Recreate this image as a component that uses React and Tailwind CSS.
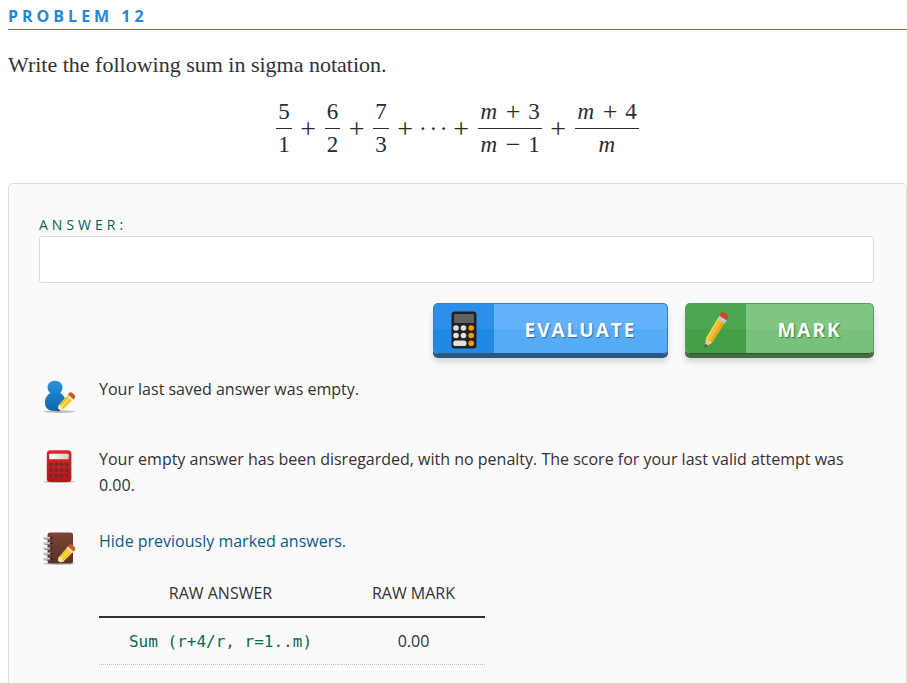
function Fraction({ top, bottom }) {
  return (
    <span className="flex flex-col items-stretch text-center">
      <span className="h-8 border-b border-[#2b2b30] px-[2px] leading-[30px]">{top}</span>
      <span className="h-8 px-[2px] leading-8">{bottom}</span>
    </span>
  );
}

function Op({ children }) {
  return <span className="w-[33px] text-center text-[28px] leading-8">{children}</span>;
}

function Term({ sign, n }) {
  return (
    <span className="flex justify-between">
      <i className="w-[18px]">m</i>
      <span className="w-[26px] text-center text-[26px]">{sign}</span>
      <span>{n}</span>
    </span>
  );
}

function Formula() {
  return (
    <div className="mt-[17px] flex items-center justify-center font-['Liberation_Serif',serif] text-[23px] text-[#2b2b30]">
      <Fraction top="5" bottom="1" />
      <Op>+</Op>
      <Fraction top="6" bottom="2" />
      <Op>+</Op>
      <Fraction top="7" bottom="3" />
      <Op>+</Op>
      <span className="-mx-1 flex w-[31px] leading-8">
        <span className="flex-1 text-center">·</span>
        <span className="flex-1 text-center">·</span>
        <span className="flex-1 text-center">·</span>
      </span>
      <Op>+</Op>
      <span className="w-16">
        <Fraction top={<Term sign="+" n="3" />} bottom={<Term sign="−" n="1" />} />
      </span>
      <Op>+</Op>
      <span className="w-16">
        <Fraction top={<Term sign="+" n="4" />} bottom={<i>m</i>} />
      </span>
    </div>
  );
}

function CalculatorIcon() {
  return (
    <svg viewBox="0 0 26 38" className="h-[38px] w-[26px]" aria-hidden="true">
      <rect x="0.5" y="0.5" width="25" height="37" rx="3" fill="#212121" />
      <rect x="3" y="3" width="20" height="9" rx="1" fill="#616161" />
      <g fill="#e0e0e0">
        <circle cx="5" cy="17" r="2.8" />
        <circle cx="12.5" cy="17" r="2.8" />
        <circle cx="5" cy="24.5" r="2.8" />
        <circle cx="12.5" cy="24.5" r="2.8" />
        <rect x="2.2" y="29.5" width="13.3" height="5.6" rx="2.6" />
      </g>
      <g fill="#ff9800">
        <circle cx="20.2" cy="17" r="2.8" />
        <circle cx="20.2" cy="24.5" r="2.8" />
        <circle cx="20.2" cy="32.2" r="2.8" />
      </g>
    </svg>
  );
}

function PencilIcon() {
  return (
    <svg viewBox="0 0 26 38" className="h-[38px] w-[26px]" aria-hidden="true">
      <path d="M3 27 L1.8 36.5 L9.5 31.5 Z" fill="#f0c98c" />
      <path d="M2.2 33 L1.5 37 L5 34.6 Z" fill="#5d4037" />
      <path d="M3 27 L15.3 6.5 L18.5 8.4 L5.5 29.5 Z" fill="#ffd54f" />
      <path d="M5.3 29 L17.6 7.8 L22.7 10.8 L9.5 31.5 Z" fill="#e5a51c" />
      <path d="M4.2 28 L16.3 7 L19.7 9 L7.3 30.3 Z" fill="#f2bd3a" />
      <path d="M14.2 8.2 L16.6 4.2 L24.1 8.6 L21.8 12.6 Z" fill="#c4c8ca" />
      <path d="M16.2 4.8 L17.4 2.4 Q18.4 0.8 21 1.4 L24 3.3 Q25.7 5 24.8 7.2 L23.6 9.2 Z" fill="#d84325" />
    </svg>
  );
}

function SmallPencil() {
  return (
    <g>
      <path d="M15.5 25.5 L24.5 15 L30 20 L20.5 29.5 L15.2 30.5 Z" fill="#fbd83c" />
      <path d="M15.5 25.5 L18 25.2 L20.8 29.4 L14.5 31 Z" fill="#f7e2b0" />
      <path d="M17.5 25.2 L26 15.8 M19.8 28 L28.5 18.6" stroke="#e3a51c" strokeWidth="1" />
      <path d="M23.5 16 L25.2 14.2 L31 19.3 L29.3 21 Z" fill="#e9e3d6" />
      <path d="M24.8 14.5 L26.6 12.6 Q28 11.8 29.5 13 L32 15.5 Q32.8 17 31.8 18 L30.6 19.5 Z" fill="#d4581c" />
      <path d="M13.8 31.5 L14.6 28.2 L17.3 30.8 Z" fill="#404040" />
    </g>
  );
}

function Shadow() {
  return <ellipse cx="16" cy="31.6" rx="16" ry="1.3" fill="#bdbdbd" />;
}

function UserIcon() {
  return (
    <svg viewBox="0 0 33 33" className="h-[33px] w-[33px]" aria-hidden="true">
      <defs>
        <linearGradient id="user-fill" x1="0" y1="0" x2="0" y2="1">
          <stop offset="0" stopColor="#2a95dc" />
          <stop offset="1" stopColor="#0866ae" />
        </linearGradient>
      </defs>
      <Shadow />
      <path
        d="M12 0.8 C16.8 0.8 19.4 3.8 19.4 7.4 C19.4 10 18.5 11.7 17 13 C20.5 14.5 22.5 18 22.5 22 C22.5 28 20 31 12.3 31 C5 31 2 28 2 22.5 C2 18.5 4 14.8 7.6 13.1 C5.7 11.8 4.6 10 4.6 7.4 C4.6 3.8 7.2 0.8 12 0.8 Z"
        fill="url(#user-fill)"
      />
      <SmallPencil />
    </svg>
  );
}

function RedCalculatorIcon() {
  return (
    <svg viewBox="0 0 33 33" className="h-[33px] w-[33px]" aria-hidden="true">
      <defs>
        <linearGradient id="red-fill" x1="0" y1="0" x2="0" y2="1">
          <stop offset="0" stopColor="#d62b2b" />
          <stop offset="1" stopColor="#b51518" />
        </linearGradient>
        <linearGradient id="display-fill">
          <stop offset="0" stopColor="#ffffff" />
          <stop offset="1" stopColor="#cfcfcf" />
        </linearGradient>
      </defs>
      <Shadow />
      <rect x="3.8" y="0.2" width="24.6" height="31.8" rx="3.5" fill="url(#red-fill)" />
      <rect x="6.2" y="3.8" width="19.5" height="5.4" rx="1" fill="url(#display-fill)" />
      <g fill="#6d2c2c">
        {[14.5, 20, 25.5].map((y) =>
          [8, 13.3, 18.6, 23.9].map((x) => <circle key={`${x}-${y}`} cx={x} cy={y} r="1.9" />)
        )}
      </g>
    </svg>
  );
}

function NotebookIcon() {
  return (
    <svg viewBox="0 0 33 33" className="h-[33px] w-[33px]" aria-hidden="true">
      <defs>
        <linearGradient id="book-fill" x1="0" y1="0" x2="0" y2="1">
          <stop offset="0" stopColor="#7c4436" />
          <stop offset="1" stopColor="#5b3029" />
        </linearGradient>
      </defs>
      <Shadow />
      <rect x="4.5" y="0.5" width="25.5" height="31" rx="2.5" fill="url(#book-fill)" />
      {[6, 11.2, 16.4, 21.6, 26.8].map((y) => (
        <g key={y}>
          <path d={`M1 ${y} H8`} stroke="#c9c9c9" strokeWidth="2" strokeLinecap="round" />
          <path d={`M1.5 ${y + 1.2} H8`} stroke="#757575" strokeWidth="0.8" />
          <circle cx="8.3" cy={y} r="1.2" fill="#2e1a16" />
        </g>
      ))}
      <SmallPencil />
    </svg>
  );
}

function Message({ icon, children }) {
  return (
    <li className="flex min-h-10">
      <div className="w-[60px] shrink-0 pt-1 pl-1">{icon}</div>
      <div className="flex-1">{children}</div>
    </li>
  );
}

export default function App() {
  return (
    <main className="flex min-h-screen flex-col bg-white pl-2 font-['Open_Sans',sans-serif] text-[#333036]">
      <h1 className="h-[30px] border-b border-[#2387cf] pt-1 text-base leading-6 font-bold tracking-[4px] text-[#2387d3]">
        PROBLEM 12
      </h1>
      <p className="mt-5 font-['Liberation_Serif',serif] text-[22px] leading-[30px]">
        Write the following sum in sigma notation.
      </p>
      <Formula />

      <section className="mt-[22px] flex-1 rounded-t-[5px] border border-b-0 border-[#dcdcdc] bg-[#fafafa] pt-[29px] pr-8 pl-[30px]">
        <form onSubmit={(e) => e.preventDefault()}>
          <label
            htmlFor="answer"
            className="block pt-[1px] text-sm leading-[22px] tracking-[4px] text-[#0b5c50]"
          >
            ANSWER:
          </label>
          <input
            id="answer"
            type="text"
            className="block h-[47px] w-full rounded-[3px] border border-[#dadada] bg-white px-3 outline-none"
          />
          <div className="mt-5 flex justify-end gap-[17px] pb-1 text-[19px] font-bold tracking-[2px] text-white">
            <button
              type="button"
              className="flex h-[51px] w-[235px] overflow-hidden rounded-[5px] border border-[#397fbd] border-b-[#2b5a85] bg-linear-to-b from-[#62b3fc] from-50% to-[#56abf5] to-50% shadow-[0_4px_0_#2b5780,0_8px_6px_rgba(0,0,0,0.15)]"
            >
              <span className="flex w-[60px] items-center justify-center self-stretch bg-linear-to-b from-[#2c90ea] from-50% to-[#2088e5] to-50% pt-[2px]">
                <CalculatorIcon />
              </span>
              <span className="flex-1 self-center pt-[3px] [text-shadow:1px_1px_1px_#2b6cab]">EVALUATE</span>
            </button>
            <button
              type="button"
              className="flex h-[51px] w-[189px] overflow-hidden rounded-[5px] border border-[#589b5b] border-b-[#2f5431] bg-linear-to-b from-[#7fc683] from-50% to-[#76c27a] to-50% shadow-[0_4px_0_#436b45,0_8px_6px_rgba(0,0,0,0.15)]"
            >
              <span className="flex w-[60px] items-center justify-center self-stretch bg-linear-to-b from-[#4da652] from-50% to-[#43a047] to-50% pt-[2px]">
                <PencilIcon />
              </span>
              <span className="flex-1 self-center pt-[3px] [text-shadow:1px_1px_1px_#3b7a3e]">MARK</span>
            </button>
          </div>
        </form>

        <ul className="mt-[18px] flex flex-col gap-[30px] text-base leading-[26px]">
          <Message icon={<UserIcon />}>Your last saved answer was empty.</Message>
          <Message icon={<RedCalculatorIcon />}>
            Your empty answer has been disregarded, with no penalty. The score for your last valid
            attempt was 0.00.
          </Message>
          <Message icon={<NotebookIcon />}>
            <a href="#marked" className="text-[#0d5a86]">
              Hide previously marked answers.
            </a>
            <table id="marked" className="mt-[14px] text-center">
              <thead>
                <tr className="h-[49px] border-b-2 border-[#333036]">
                  <th className="w-[243px] pt-[2px] font-normal">RAW ANSWER</th>
                  <th className="w-[143px] pt-[2px] font-normal">RAW MARK</th>
                </tr>
              </thead>
              <tbody>
                <tr className="h-[47px] border-b border-dotted border-[#bbbbbb]">
                  <td className="pt-[2px] font-['DejaVu_Sans_Mono',monospace] text-[#0b6650]">
                    Sum (r+4/r, r=1..m)
                  </td>
                  <td>0.00</td>
                </tr>
              </tbody>
            </table>
          </Message>
        </ul>
      </section>
    </main>
  );
}
